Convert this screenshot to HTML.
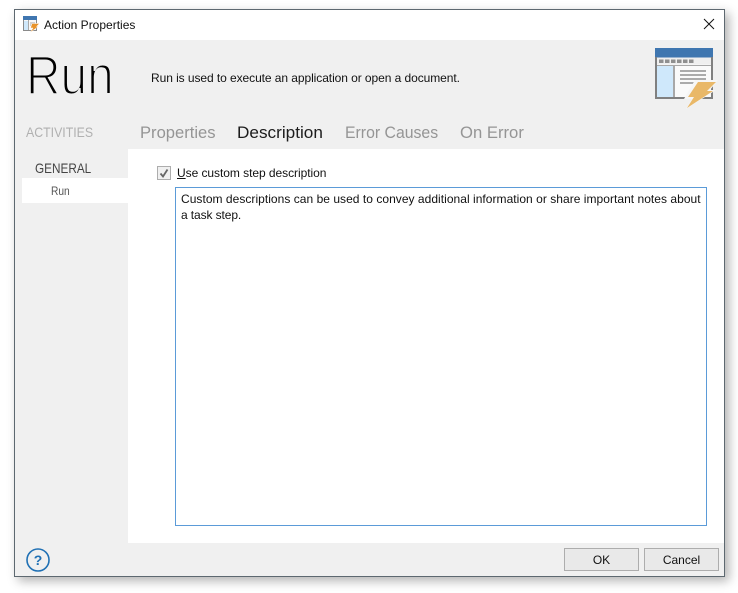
<!DOCTYPE html>
<html><head><meta charset="utf-8">
<style>
html,body{margin:0;padding:0;background:#fff;}
body{width:738px;height:593px;position:relative;overflow:hidden;font-family:"Liberation Sans",sans-serif;color:#1a1a1a;}
.a{position:absolute;white-space:nowrap;}
.t{font-size:12px;line-height:16px;}
.tab{font-size:17px;line-height:22px;top:122px;color:#959595;transform-origin:0 50%;}
</style></head>
<body>
<div class="a" style="left:14px;top:9px;width:709px;height:566px;border:1px solid #5d6870;background:#f0f0f0;box-shadow:4px 4px 10px rgba(0,0,0,.3);"></div>
<div class="a" style="left:15px;top:10px;width:709px;height:30px;background:#fff;"></div>
<svg class="a" style="left:23px;top:16px" width="17" height="17" viewBox="0 0 17 17">
<rect x="0.500" y="0.500" width="13" height="14" fill="#f8f8f8" stroke="#8a8a8a"/>
<rect x="0" y="0" width="14" height="4" fill="#3f76b0"/>
<rect x="1" y="5" width="4" height="9" fill="#cfe8fb"/>
<rect x="5" y="4" width="1" height="10" fill="#a8a8a8"/>
<path d="M7 7H12M7 9H12" stroke="#aaa" fill="none"/>
<path d="M9 7.500H16.500L13.500 10.500H15.500L7 16.500L10 12H7.500Z" fill="#e8932a" stroke="#fff" stroke-width=".5"/>
</svg>
<div class="a" style="left:44px;top:17px;font-size:12px;line-height:16px;color:#111;">Action Properties</div>
<svg class="a" style="left:703px;top:18px" width="12" height="12" viewBox="0 0 12 12"><path d="M1 1L11 11M11 1L1 11" stroke="#111" stroke-width="1" fill="none"/></svg>
<div class="a" style="left:26px;top:44px;font-size:55px;line-height:62px;color:#000;transform:scaleX(.87);transform-origin:0 50%;-webkit-text-stroke:2px #f0f0f0;">Run</div>
<div class="a t" style="left:151px;top:70px;color:#111;letter-spacing:-.07px;">Run is used to execute an application or open a document.</div>
<svg class="a" style="left:654px;top:47px" width="64" height="62" viewBox="0 0 64 62">
<rect x="1" y="1" width="58" height="51" rx="1" fill="#fafafa"/>
<rect x="1" y="1" width="58" height="9.500" fill="#3f76b0"/>
<rect x="3" y="10.500" width="54" height="7" fill="#efefef"/>
<g fill="#8f8f8f"><rect x="5" y="12.500" width="4.500" height="3.500"/><rect x="11" y="12.500" width="4.500" height="3.500"/><rect x="17" y="12.500" width="4.500" height="3.500"/><rect x="23" y="12.500" width="4.500" height="3.500"/><rect x="29" y="12.500" width="4.500" height="3.500"/><rect x="35" y="12.500" width="4.500" height="3.500"/></g>
<rect x="3" y="19" width="16" height="31" fill="#cfe8fb"/>
<rect x="19" y="18" width="2" height="33" fill="#a8a8a8"/>
<rect x="1" y="18" width="58" height="1" fill="#a8a8a8"/>
<path d="M2 10V51H58V10" fill="none" stroke="#808080" stroke-width="2"/>
<g fill="#ababab"><rect x="26" y="23" width="26" height="2"/><rect x="26" y="27" width="26" height="2"/><rect x="26" y="31" width="26" height="2"/><rect x="26" y="35" width="16" height="2"/></g>
<path d="M41 33H64L56 43H62L32 62L38 52H30Z" fill="#f6f6f6"/>
<path d="M44 35H62L53 44H59L33 61L40 50H34Z" fill="#e9b868"/>
</svg>
<div class="a" style="left:26px;top:123px;font-size:14px;line-height:18px;color:#b0b0b0;transform:scaleX(.88);transform-origin:0 50%;">ACTIVITIES</div>
<div class="a tab" style="left:140px;transform:scaleX(.975);">Properties</div>
<div class="a tab" style="left:237px;color:#1c1c1c;transform:scaleX(1.01);">Description</div>
<div class="a tab" style="left:345px;transform:scaleX(.93);">Error Causes</div>
<div class="a tab" style="left:460px;transform:scaleX(.98);">On Error</div>
<div class="a" style="left:128px;top:149px;width:596px;height:394px;background:#fff;"></div>
<div class="a" style="left:35px;top:159px;font-size:14px;line-height:18px;color:#444;transform:scaleX(.84);transform-origin:0 50%;">GENERAL</div>
<div class="a" style="left:22px;top:178px;width:106px;height:25px;background:#fff;"></div>
<div class="a t" style="left:51px;top:183px;color:#555;transform:scaleX(.85);transform-origin:0 50%;">Run</div>
<div class="a" style="left:157px;top:166px;width:12px;height:12px;border:1px solid #adadad;background:#f0f0f0;"></div>
<svg class="a" style="left:157px;top:166px" width="14" height="14" viewBox="0 0 14 14"><path d="M3.500 7.500L6 10.500L10.500 3.500" fill="none" stroke="#666" stroke-width="1.800"/></svg>
<div class="a t" style="left:177px;top:165px;color:#111;letter-spacing:-.05px;"><span style="text-decoration:underline;">U</span>se custom step description</div>
<div class="a" style="left:175px;top:187px;width:530px;height:337px;border:1px solid #5b9bd8;background:#fff;"></div>
<div class="a t" style="left:181px;top:191px;color:#111;letter-spacing:.035px;">Custom descriptions can be used to convey additional information or share important notes about</div>
<div class="a t" style="left:181px;top:207px;color:#111;letter-spacing:-.1px;">a task step.</div>
<svg class="a" style="left:26px;top:548px" width="24" height="24" viewBox="0 0 24 24"><circle cx="12" cy="12" r="11" fill="none" stroke="#1f70b4" stroke-width="1.600"/><text x="12" y="17" text-anchor="middle" font-family="Liberation Sans" font-weight="bold" font-size="14" fill="#1f70b4">?</text></svg>
<div class="a" style="left:564px;top:548px;width:73px;height:21px;border:1px solid #adadad;background:#e9e9e9;text-align:center;font-size:12px;line-height:23px;color:#111;">OK</div>
<div class="a" style="left:644px;top:548px;width:73px;height:21px;border:1px solid #adadad;background:#e9e9e9;text-align:center;font-size:12px;line-height:23px;color:#111;">Cancel</div>
</body></html>
